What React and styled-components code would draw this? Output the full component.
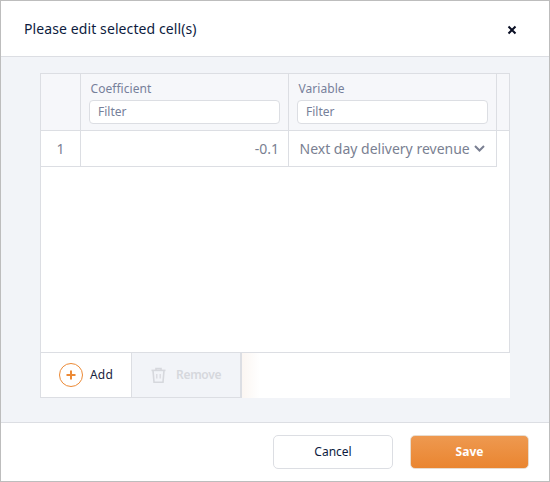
import React from "react";
import styled, { createGlobalStyle } from "styled-components";

const Global = createGlobalStyle`
  html, body { margin: 0; padding: 0; background: #fff; }
  body { font-family: "Noto Sans", "Open Sans", sans-serif; }
  * { box-sizing: border-box; }
`;

const Dialog = styled.div`
  width: 550px;
  height: 482px;
  display: flex;
  flex-direction: column;
  background: #fff;
  border: 1px solid #bdbdbd;
`;

const Header = styled.header`
  height: 56px;
  flex: none;
  display: flex;
  align-items: center;
  justify-content: space-between;
  padding: 0 32px 0 23px;
  border-bottom: 1px solid #dcdee3;
`;

const Title = styled.h1`
  margin: 0;
  font-size: 14px;
  font-weight: 400;
  letter-spacing: 0.1px;
  color: #0d1b3e;
`;

const Close = styled.button`
  width: 10px;
  height: 10px;
  padding: 0;
  margin-top: 3px;
  display: flex;
  border: none;
  background: none;
`;

const Body = styled.main`
  flex: 1;
  padding: 16px 39px 24px;
  background: #f2f4f8;
  display: flex;
  flex-direction: column;
`;

const Grid = styled.div`
  flex: 1;
  display: flex;
  flex-direction: column;
  background: #fff;
  border: 1px solid #dcdee3;
  border-bottom: none;
`;

const HeadRow = styled.div`
  height: 57px;
  flex: none;
  display: grid;
  grid-template-columns: 40px 208px 208px 1fr;
  background: #f6f7fa;
  border-bottom: 1px solid #dcdee3;
`;

const HeadCell = styled.div`
  display: flex;
  flex-direction: column;
  padding: 6px 8px 0 8px;
  border-right: ${(p) => (p.$last ? "none" : "1px solid #dcdee3")};
`;

const Label = styled.span`
  font-size: 12px;
  line-height: 17px;
  padding-left: 1.5px;
  letter-spacing: 0.05px;
  color: #76809a;
`;

const Filter = styled.input`
  width: 100%;
  height: 24px;
  margin-top: 3px;
  padding: 0 8px 2px;
  font: 12px "Noto Sans", sans-serif;
  color: #76809a;
  background: #fff;
  border: 1px solid #dcdee3;
  border-radius: 4px;
  outline: none;
  &::placeholder { color: #76809a; opacity: 1; }
`;

const Row = styled.div`
  height: 36px;
  flex: none;
  display: grid;
  grid-template-columns: 40px 208px 208px;
  width: 456px;
  border-bottom: 1px solid #dcdee3;
`;

const Cell = styled.div`
  display: flex;
  align-items: center;
  font-size: 14px;
  color: #7a7f92;
  justify-content: ${(p) => p.$align || "flex-start"};
  padding: ${(p) => p.$pad || "0"};
  border-right: 1px solid #dcdee3;
  white-space: nowrap;
`;

const Chevron = styled.svg`
  margin-left: 4px;
  flex: none;
`;

const Spacer = styled.div`
  flex: 1;
`;

const Toolbar = styled.div`
  height: 46px;
  flex: none;
  display: flex;
  margin-left: -1px;
  margin-right: -1px;
  background: #fff;
`;

const AddButton = styled.button`
  width: 91px;
  display: flex;
  align-items: center;
  gap: 7px;
  padding: 0 0 1px 18px;
  font: 12px "Noto Sans", sans-serif;
  letter-spacing: 0.2px;
  color: #1a2340;
  background: #fff;
  border: 1px solid #dcdee3;
  border-right: none;
`;

const PlusRing = styled.span`
  width: 24px;
  height: 24px;
  flex: none;
  display: flex;
  align-items: center;
  justify-content: center;
  border: 1px solid #ec8a36;
  border-radius: 50%;
`;

const RemoveButton = styled.button`
  width: 111px;
  display: flex;
  align-items: center;
  gap: 10px;
  padding: 0 0 1px 19px;
  font: 600 12px "Noto Sans", sans-serif;
  letter-spacing: -0.3px;
  color: #d6d8dd;
  background: #f2f4f8;
  border: 1px solid #dcdee3;
  border-right-width: 2px;
`;

const Fade = styled.div`
  flex: 1;
  background: linear-gradient(to right, #fbf6f2 0, #fff 18px);
  border-top: 1px solid #dcdee3;
`;

const Footer = styled.footer`
  height: 59px;
  flex: none;
  display: flex;
  align-items: flex-start;
  justify-content: flex-end;
  gap: 17px;
  padding: 12px 20px 0 0;
  border-top: 1px solid #dcdee3;
`;

const Button = styled.button`
  width: ${(p) => (p.$primary ? "119px" : "120px")};
  height: 34px;
  padding: 0 0 1px;
  font: ${(p) => (p.$primary ? "700" : "400")} 12px "Noto Sans", sans-serif;
  color: ${(p) => (p.$primary ? "#fff" : "#0d1b3e")};
  background: ${(p) => (p.$primary ? "linear-gradient(#ee9950, #ea8530)" : "#fff")};
  border: 1px solid ${(p) => (p.$primary ? "#e8dccf" : "#dcdee3")};
  border-radius: 5px;
`;

const TrashIcon = () => (
  <svg width="15" height="16" viewBox="0 0 15 16" fill="none" stroke="#d6d8dd" strokeWidth="1.6">
    <path d="M5 3V1.6h5V3" />
    <path d="M0.5 3.4h14" />
    <path d="M2 3.4l1 11.8h9l1-11.8" />
    <path d="M5.8 7v4.5M9.2 7v4.5" strokeWidth="1.2" />
  </svg>
);

export default function App() {
  return (
    <>
      <Global />
      <Dialog>
        <Header>
          <Title>Please edit selected cell(s)</Title>
          <Close aria-label="Close">
            <svg width="10" height="10" viewBox="0 0 10 10">
              <path d="M1.5 1.5l7 7M8.5 1.5l-7 7" stroke="#0a0f24" strokeWidth="2" fill="none" />
            </svg>
          </Close>
        </Header>
        <Body>
          <Grid>
            <HeadRow>
              <HeadCell />
              <HeadCell>
                <Label>Coefficient</Label>
                <Filter placeholder="Filter" />
              </HeadCell>
              <HeadCell>
                <Label>Variable</Label>
                <Filter placeholder="Filter" />
              </HeadCell>
              <HeadCell $last />
            </HeadRow>
            <Row>
              <Cell $align="center">1</Cell>
              <Cell $align="flex-end" $pad="0 9px 0 0">-0.1</Cell>
              <Cell $pad="0 0 0 10.5px">
                Next day delivery revenue
                <Chevron width="11" height="7" viewBox="0 0 11 7">
                  <path d="M1 1l4.5 4.5L10 1" stroke="#7a7f92" strokeWidth="2" fill="none" />
                </Chevron>
              </Cell>
            </Row>
            <Spacer />
            <Toolbar>
              <AddButton>
                <PlusRing>
                  <svg width="10" height="10" viewBox="0 0 10 10">
                    <path d="M5 0.5v9M0.5 5h9" stroke="#ec8a36" strokeWidth="2" fill="none" />
                  </svg>
                </PlusRing>
                Add
              </AddButton>
              <RemoveButton disabled>
                <TrashIcon />
                Remove
              </RemoveButton>
              <Fade />
            </Toolbar>
          </Grid>
        </Body>
        <Footer>
          <Button>Cancel</Button>
          <Button $primary>Save</Button>
        </Footer>
      </Dialog>
    </>
  );
}
